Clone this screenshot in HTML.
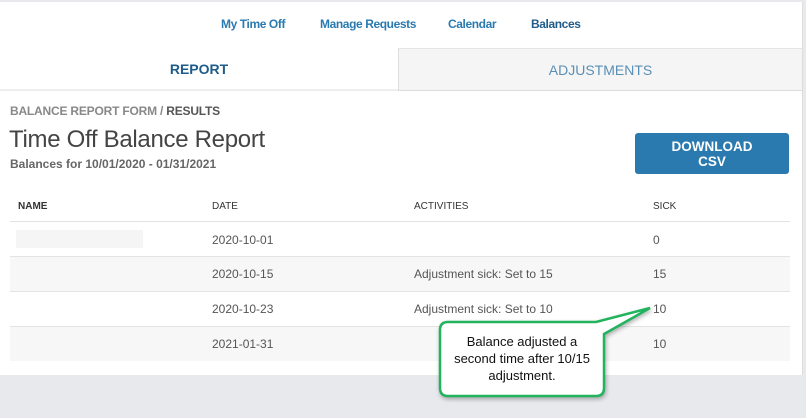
<!DOCTYPE html>
<html><head><style>
*{margin:0;padding:0;box-sizing:border-box}
body{width:806px;height:418px;background:#e8e9ed;font-family:"Liberation Sans",sans-serif;position:relative;overflow:hidden}
.main{position:absolute;left:0;top:2px;width:803px;height:373px;background:#fff;border-right:1px solid #ddd}
.nav a{position:absolute;top:15px;font-size:12px;color:#2a7ab0;font-weight:bold;letter-spacing:-0.4px}
.tab{position:absolute;top:46px;height:43px;font-size:14px;text-align:center;line-height:43px}
.t{position:absolute;font-size:12px;color:#555}
.row{position:absolute;left:10px;width:780px;height:35px;border-top:1px solid #e3e3e3}
</style></head><body>
<div class="main">
<div class="nav"><a style="left:221px">My Time Off</a><a style="left:320px">Manage Requests</a><a style="left:448px">Calendar</a><a style="left:531px;color:#1f5c8a">Balances</a></div>
<div class="tab" style="left:0;width:398px;color:#1f5c8a;font-weight:bold;border-bottom:2px solid #eee">REPORT</div>
<div class="tab" style="left:398px;width:405px;background:#f5f5f5;color:#5a8fb5;border:1px solid #ddd;border-top:1px solid #e5e5e5">ADJUSTMENTS</div>
<div class="t" style="left:10px;top:102px;color:#888;font-weight:bold;letter-spacing:-0.2px">BALANCE REPORT FORM / <span style="color:#555">RESULTS</span></div>
<div class="t" style="left:9px;top:124px;font-size:24px;color:#444;letter-spacing:-0.3px">Time Off Balance Report</div>
<div class="t" style="left:10px;top:155px;color:#666;font-weight:bold">Balances for 10/01/2020 - 01/31/2021</div>
<div style="position:absolute;left:635px;top:131px;width:154px;height:41px;background:#2a7ab0;border-radius:3px;color:#fff;font-weight:bold;font-size:13.5px;text-align:center;line-height:15px;padding-top:6px">DOWNLOAD<br>CSV</div>
<div class="t" style="left:18px;top:199px;font-size:10px;font-weight:bold;color:#333">NAME</div>
<div class="t" style="left:212px;top:199px;font-size:10px;color:#333">DATE</div>
<div class="t" style="left:414px;top:199px;font-size:10px;color:#333">ACTIVITIES</div>
<div class="t" style="left:653px;top:199px;font-size:10px;color:#333">SICK</div>
<div class="row" style="top:219px"></div>
<div class="row" style="top:254px;background:#f7f7f7"></div>
<div class="row" style="top:289px"></div>
<div class="row" style="top:324px;background:#f7f7f7"></div>
<div style="position:absolute;left:16px;top:228px;width:127px;height:18px;background:#f5f5f5"></div>
<div class="t" style="left:212px;top:231px">2020-10-01</div><div class="t" style="left:653px;top:231px">0</div>
<div class="t" style="left:212px;top:265px">2020-10-15</div><div class="t" style="left:414px;top:265px">Adjustment sick: Set to 15</div><div class="t" style="left:653px;top:265px">15</div>
<div class="t" style="left:212px;top:300px">2020-10-23</div><div class="t" style="left:414px;top:300px">Adjustment sick: Set to 10</div><div class="t" style="left:653px;top:300px">10</div>
<div class="t" style="left:212px;top:335px">2021-01-31</div><div class="t" style="left:653px;top:335px">10</div>
</div>
<svg style="position:absolute;left:0;top:0" width="806" height="418">
<path d="M448 322 H596 L650 308 L604 334 V388 Q604 396 596 396 H448 Q440 396 440 388 V330 Q440 322 448 322 Z" fill="#fff" stroke="#22b35e" stroke-width="2.5" style="filter:drop-shadow(1px 2px 2px rgba(0,0,0,.3))"/>
<text x="522" y="346" font-family="Liberation Sans" font-size="13" text-anchor="middle" fill="#111">Balance adjusted a</text>
<text x="522" y="363" font-family="Liberation Sans" font-size="13" text-anchor="middle" fill="#111">second time after 10/15</text>
<text x="522" y="380" font-family="Liberation Sans" font-size="13" text-anchor="middle" fill="#111">adjustment.</text>
</svg>
</body></html>
